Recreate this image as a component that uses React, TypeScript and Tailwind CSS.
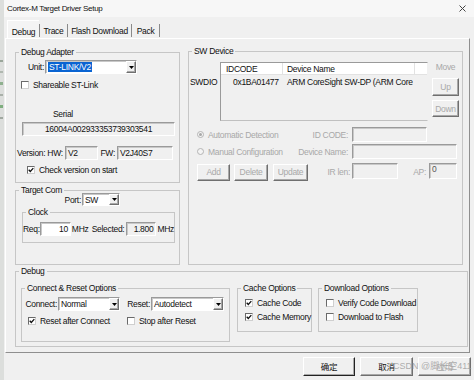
import React from "react";

const sunken =
  "border border-t-[#9a9a9a] border-l-[#9a9a9a] border-b-white border-r-white shadow-[inset_1px_1px_0_#c8c8c8]";
const raised =
  "border border-t-white border-l-white border-b-[#6f6f6f] border-r-[#6f6f6f] shadow-[inset_-1px_-1px_0_#a8a8a8]";

function Group({
  label,
  className = "",
  children,
}: {
  label: string;
  className?: string;
  children?: React.ReactNode;
}) {
  return (
    <fieldset className={`min-w-0 shrink-0 border border-[#c6c6c6] ${className}`}>
      <legend className="ml-[3px] px-[2px] leading-[10px]">{label}</legend>
      {children}
    </fieldset>
  );
}

function Check({ on }: { on?: boolean }) {
  return (
    <span className="flex h-[8px] w-[8px] shrink-0 items-center justify-center border border-t-[#6a6a6a] border-l-[#6a6a6a] border-b-[#cfcfcf] border-r-[#cfcfcf] bg-white">
      {on && (
        <svg width="6" height="6" viewBox="0 0 6 6">
          <path d="M0.7 2.7 L2.3 4.5 L5.3 1.1" fill="none" stroke="#111" strokeWidth="1.3" />
        </svg>
      )}
    </span>
  );
}

function Radio({ on }: { on?: boolean }) {
  return (
    <span className="flex h-[7px] w-[7px] shrink-0 items-center justify-center rounded-full border border-[#b4b4b4] bg-[#f4f4f4]">
      {on && <span className="h-[3px] w-[3px] rounded-full bg-[#a8a8a8]" />}
    </span>
  );
}

function Combo({ className = "", children }: { className?: string; children?: React.ReactNode }) {
  return (
    <div className={`flex shrink-0 items-stretch bg-white ${sunken} ${className}`}>
      <div className="flex flex-1 items-center overflow-hidden whitespace-nowrap pl-[2px]">{children}</div>
      <div className={`flex w-[10px] items-center justify-center bg-[#f0f0f0] ${raised}`}>
        <svg width="5" height="3" viewBox="0 0 5 3">
          <path d="M0 0h5L2.5 3z" fill="#000" />
        </svg>
      </div>
    </div>
  );
}

function Box({ className = "", children }: { className?: string; children?: React.ReactNode }) {
  return (
    <div className={`flex shrink-0 items-center overflow-hidden whitespace-nowrap ${sunken} ${className}`}>
      {children}
    </div>
  );
}

function Btn({ className = "", children }: { className?: string; children?: React.ReactNode }) {
  return (
    <div className={`flex shrink-0 items-center justify-center bg-[#f0f0f0] ${raised} ${className}`}>
      {children}
    </div>
  );
}

function CheckRow({ on, label, className = "" }: { on?: boolean; label: string; className?: string }) {
  return (
    <div className={`flex h-[10px] items-center whitespace-nowrap ${className}`}>
      <Check on={on} />
      <span className="ml-[4px]">{label}</span>
    </div>
  );
}

export default function App() {
  return (
    <div className="relative flex h-[380px] w-[474px] overflow-hidden bg-[#f0f0f0] font-['Liberation_Sans',Arial,sans-serif] text-[8.5px] leading-[10px] tracking-[-0.3px] text-[#111]">
      {/* desktop strip behind the dialog */}
      <div className="flex w-[4px] shrink-0 flex-col gap-[9px] bg-[#dcdedc] pt-[60px]">
        <div className="h-[2px] w-[3px] bg-[#9aa69a]" />
        <div className="h-[2px] w-[3px] bg-[#b0b8b0]" />
        <div className="h-[3px] w-[3px] bg-[#8fb08f]" />
        <div className="h-[2px] w-[3px] bg-[#a9b0a9]" />
        <div className="h-[3px] w-[3px] bg-[#7fae7f]" />
        <div className="h-[2px] w-[3px] bg-[#a0a8a0]" />
      </div>

      <div className="flex flex-1 flex-col">
        {/* title bar */}
        <div className="flex h-[17px] items-center justify-between bg-[#f7f7f7] pl-[3px] pr-[8px] text-[8px]">
          <span>Cortex-M Target Driver Setup</span>
          <svg width="7" height="7" viewBox="0 0 7 7">
            <path d="M0.5 0.5 L6.5 6.5 M6.5 0.5 L0.5 6.5" stroke="#444" strokeWidth="1" />
          </svg>
        </div>

        {/* tabs */}
        <div className="flex h-[21px] items-end pl-[3px]">
          <div className="flex h-[18px] w-[32px] items-center justify-center border-l border-t border-white bg-[#f4f4f4] pt-[4px]">
            Debug
          </div>
          <div className="mb-[1px] h-[13px] w-px bg-[#8a8a8a]" />
          <div className="flex h-[18px] w-[27px] items-center justify-center pt-[4px]">Trace</div>
          <div className="mb-[1px] h-[13px] w-px bg-[#8a8a8a]" />
          <div className="flex h-[18px] w-[63px] items-center justify-center pt-[4px]">Flash Download</div>
          <div className="mb-[1px] h-[13px] w-px bg-[#8a8a8a]" />
          <div className="flex h-[18px] w-[27px] items-center justify-center pt-[4px]">Pack</div>
          <div className="mb-[1px] h-[13px] w-px bg-[#8a8a8a]" />
        </div>

        {/* tab page */}
        <div className="ml-[1px] flex h-[315px] w-[465px] flex-col border border-b-[#8f8f8f] border-l-white border-r-[#8f8f8f] border-t-white pl-[9px] pt-[7px]">
          <div className="flex items-start gap-[8px]">
            {/* left column */}
            <div className="mt-[1px] flex w-[165px] flex-col gap-[2px]">
              <Group label="Debug Adapter" className="h-[136px] w-[165px]">
                <div className="mt-[3px] flex h-[14px] items-center">
                  <span className="w-[29px] pr-[1px] text-right">Unit:</span>
                  <Combo className="h-[14px] w-[92px]">
                    <span className="bg-[#0a64d2] px-[1px] text-white">ST-LINK/V2</span>
                  </Combo>
                </div>
                <CheckRow label="Shareable ST-Link" className="ml-[5px] mt-[6px]" />
                <div className="ml-[37px] mt-[19px]">Serial</div>
                <Box className="ml-[6px] mt-[3px] h-[14px] w-[153px] justify-center">
                  16004A002933353739303541
                </Box>
                <div className="mt-[10px] flex h-[14px] items-center">
                  <span className="w-[49px] whitespace-nowrap pl-[1px]">Version: HW:</span>
                  <Box className="h-[14px] w-[33px] pl-[2px]">V2</Box>
                  <span className="w-[19px] pr-[2px] text-right">FW:</span>
                  <Box className="h-[14px] w-[56px] pl-[2px]">V2J40S7</Box>
                </div>
                <CheckRow on label="Check version on start" className="ml-[11px] mt-[5px]" />
              </Group>

              <Group label="Target Com" className="h-[80px] w-[165px]">
                <div className="-mt-[2px] flex h-[13px] items-center">
                  <span className="w-[66px] pr-[1px] text-right">Port:</span>
                  <Combo className="h-[13px] w-[38px]">SW</Combo>
                </div>
                <Group label="Clock" className="ml-[6px] mt-[1px] h-[36px] w-[153px]">
                  <div className="mt-[5px] flex h-[14px] items-center whitespace-nowrap">
                    <span className="w-[17px]">Req:</span>
                    <Box className="h-[14px] w-[31px] justify-end bg-white pr-[2px]">10</Box>
                    <span className="w-[19px] pl-[1px]">MHz</span>
                    <span className="w-[37px] pr-[2px] text-right">Selected:</span>
                    <Box className="h-[14px] w-[30px] justify-end pr-[2px]">1.800</Box>
                    <span className="pl-[1px]">MHz</span>
                  </div>
                </Group>
              </Group>
            </div>

            {/* SW device */}
            <Group label="SW Device" className="h-[219px] w-[275px]">
              <div className="mt-[6px] flex items-start">
                <span className="w-[31px] pl-[1px] pt-[15px]">SWDIO</span>
                <div className="flex h-[59px] w-[208px] flex-col border border-b-[#c0c0c0] border-l-[#9a9a9a] border-r-[#f0f0f0] border-t-[#9a9a9a]">
                  <div className="flex h-[12px] bg-white">
                    <span className="flex w-[62px] items-center border-b border-r border-[#e2e2e2] pl-[5px]">IDCODE</span>
                    <span className="flex w-[132px] items-center border-b border-r border-[#e2e2e2] pl-[4px]">Device Name</span>
                    <span className="flex-1 border-b border-[#e2e2e2]" />
                  </div>
                  <div className="mt-[1px] flex h-[12px] items-center whitespace-nowrap">
                    <span className="w-[62px] pl-[12px]">0x1BA01477</span>
                    <span className="overflow-hidden pl-[4px]">ARM CoreSight SW-DP (ARM Core</span>
                  </div>
                </div>
                <div className="ml-[4px] flex w-[27px] flex-col text-[#a8a8a8]">
                  <span className="h-[10px] text-center">Move</span>
                  <Btn className="mt-[6px] h-[18px] w-[27px]">Up</Btn>
                  <Btn className="mt-[4px] h-[17px] w-[27px]">Down</Btn>
                </div>
              </div>

              <div className="mt-[6px] flex h-[15px] items-center text-[#a8a8a8]">
                <div className="flex w-[163px] items-center whitespace-nowrap">
                  <span className="ml-[8px]">
                    <Radio on />
                  </span>
                  <span className="ml-[4px]">Automatic Detection</span>
                  <span className="ml-auto pr-[4px]">ID CODE:</span>
                </div>
                <Box className="h-[15px] w-[75px]" />
              </div>
              <div className="mt-[2px] flex h-[15px] items-center text-[#a8a8a8]">
                <div className="flex w-[163px] items-center whitespace-nowrap">
                  <span className="ml-[8px]">
                    <Radio />
                  </span>
                  <span className="ml-[4px]">Manual Configuration</span>
                  <span className="ml-auto pr-[4px]">Device Name:</span>
                </div>
                <Box className="h-[15px] w-[105px]" />
              </div>
              <div className="mt-[4px] flex h-[18px] items-start text-[#a8a8a8]">
                <div className="flex h-[18px] w-[163px] items-center whitespace-nowrap">
                  <Btn className="ml-[8px] h-[17px] w-[33px]">Add</Btn>
                  <Btn className="ml-[4px] h-[17px] w-[34px]">Delete</Btn>
                  <Btn className="ml-[5px] h-[17px] w-[35px]">Update</Btn>
                  <span className="ml-auto pr-[2px]">IR len:</span>
                </div>
                <Box className="h-[16px] w-[46px]" />
                <span className="flex h-[18px] w-[31px] items-center justify-end pr-[3px]">AP:</span>
                <Box className="h-[16px] w-[28px] items-start pl-[2px] text-[#555]">0</Box>
              </div>
            </Group>
          </div>

          {/* Debug */}
          <Group label="Debug" className="mt-[1px] h-[81px] w-[453px]">
            <div className="ml-[5px] mt-[7px] flex items-start">
              <Group label="Connect & Reset Options" className="h-[59px] w-[209px]">
                <div className="mt-[4px] flex h-[14px] items-center whitespace-nowrap">
                  <span className="w-[36px] pr-[1px] text-right">Connect:</span>
                  <Combo className="h-[14px] w-[62px]">Normal</Combo>
                  <span className="w-[31px] pr-[1px] text-right">Reset:</span>
                  <Combo className="h-[14px] w-[73px]">Autodetect</Combo>
                </div>
                <div className="mt-[5px] flex items-center">
                  <CheckRow on label="Reset after Connect" className="w-[105px] pl-[6px]" />
                  <CheckRow label="Stop after Reset" />
                </div>
              </Group>

              <Group label="Cache Options" className="ml-[7px] h-[49px] w-[75px]">
                <CheckRow on label="Cache Code" className="ml-[7px] mt-[5px]" />
                <CheckRow on label="Cache Memory" className="ml-[7px] mt-[4px]" />
              </Group>

              <Group label="Download Options" className="ml-[6px] h-[49px] w-[100px]">
                <div className="overflow-hidden">
                  <CheckRow label="Verify Code Download" className="ml-[7px] mt-[5px]" />
                  <CheckRow label="Download to Flash" className="ml-[7px] mt-[4px]" />
                </div>
              </Group>
            </div>
          </Group>
        </div>

        {/* dialog buttons */}
        <div className="mt-[4px] flex justify-end gap-[5px] pr-[3px] font-['Liberation_Sans','Noto_Sans_CJK_SC',sans-serif]">
          <Btn className="h-[19px] w-[52px] border-b-[#222] border-r-[#222]">确定</Btn>
          <Btn className="h-[19px] w-[53px]">取消</Btn>
          <Btn className="h-[19px] w-[53px] text-[#a8a8a8]">应用</Btn>
        </div>
      </div>

      {/* watermark */}
      <span className="pointer-events-none absolute left-[393px] top-[361px] whitespace-nowrap font-['Liberation_Sans','Noto_Sans_CJK_SC',sans-serif] text-[9px] tracking-normal text-[#9a9a9a]/80">
        CSDN @脚长空411
      </span>
    </div>
  );
}
